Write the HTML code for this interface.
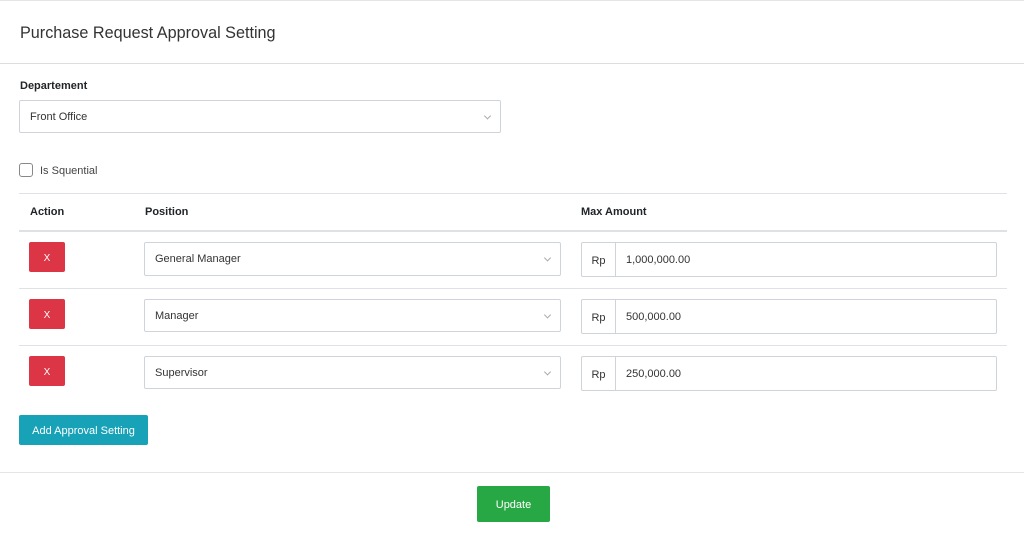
<!DOCTYPE html><html><head><style>
*{margin:0;padding:0;box-sizing:border-box}
body{width:1024px;height:535px;background:#fff;font-family:"Liberation Sans",sans-serif;color:#212529;position:relative;overflow:hidden;font-size:11px}
.a{position:absolute}
.sel{position:absolute;border:1px solid #ced4da;border-radius:2px;background:#fff;padding-left:10px;display:flex;align-items:center;color:#333}
.chev{position:absolute;right:10px;top:50%;width:5px;height:5px;border-right:1px solid #aaa;border-bottom:1px solid #aaa;transform:translateY(-70%) rotate(45deg)}
.x{position:absolute;left:29px;width:36px;height:30px;background:#dc3545;color:#fff;border-radius:2px;display:flex;align-items:center;justify-content:center;font-size:10px;padding-top:2px}
.grp{position:absolute;left:581px;width:416px;height:35px;border:1px solid #ced4da;border-radius:2px;display:flex;color:#333}
.grp .ad{width:34px;border-right:1px solid #ced4da;display:flex;align-items:center;justify-content:center;padding-top:3px}
.grp .v{padding-left:10px;display:flex;align-items:center}
.hl{position:absolute;left:19px;width:988px;height:1px;background:#dee2e6}
</style></head><body>
<div class="a" style="left:0;top:0;width:1024px;height:1px;background:#e5e5e5"></div>
<div class="a" style="left:20px;top:24px;font-size:16.2px;color:#333">Purchase Request Approval Setting</div>
<div class="a" style="left:0;top:63px;width:1024px;height:1px;background:#ddd"></div>
<div class="a" style="left:20px;top:80px;font-weight:bold">Departement</div>
<div class="sel" style="left:19px;top:100px;width:482px;height:33px">Front Office<span class="chev"></span></div>
<div class="a" style="left:19px;top:163px;width:14px;height:14px;border:1px solid #888;border-radius:3px"></div>
<div class="a" style="left:40px;top:165px;color:#444">Is Squential</div>
<div class="hl" style="top:193px"></div>
<div class="a" style="left:30px;top:206px;font-weight:bold">Action</div>
<div class="a" style="left:145px;top:206px;font-weight:bold">Position</div>
<div class="a" style="left:581px;top:206px;font-weight:bold">Max Amount</div>
<div class="hl" style="top:230px;height:2px"></div>
<div class="x" style="top:242px">X</div>
<div class="sel" style="left:144px;top:242px;width:417px;height:34px">General Manager<span class="chev"></span></div>
<div class="grp" style="top:242px"><div class="ad">Rp</div><div class="v">1,000,000.00</div></div>
<div class="hl" style="top:288px"></div>
<div class="x" style="top:299px">X</div>
<div class="sel" style="left:144px;top:299px;width:417px;height:33px">Manager<span class="chev"></span></div>
<div class="grp" style="top:299px"><div class="ad">Rp</div><div class="v">500,000.00</div></div>
<div class="hl" style="top:345px"></div>
<div class="x" style="top:356px">X</div>
<div class="sel" style="left:144px;top:356px;width:417px;height:33px">Supervisor<span class="chev"></span></div>
<div class="grp" style="top:356px"><div class="ad">Rp</div><div class="v">250,000.00</div></div>
<div class="a" style="left:19px;top:415px;width:129px;height:30px;background:#17a2b8;color:#fff;border-radius:2px;display:flex;align-items:center;justify-content:center;padding-top:2px">Add Approval Setting</div>
<div class="a" style="left:0;top:472px;width:1024px;height:1px;background:#e5e5e5"></div>
<div class="a" style="left:477px;top:486px;width:73px;height:36px;background:#28a745;color:#fff;border-radius:2px;display:flex;align-items:center;justify-content:center;padding-top:2px">Update</div>
</body></html>
